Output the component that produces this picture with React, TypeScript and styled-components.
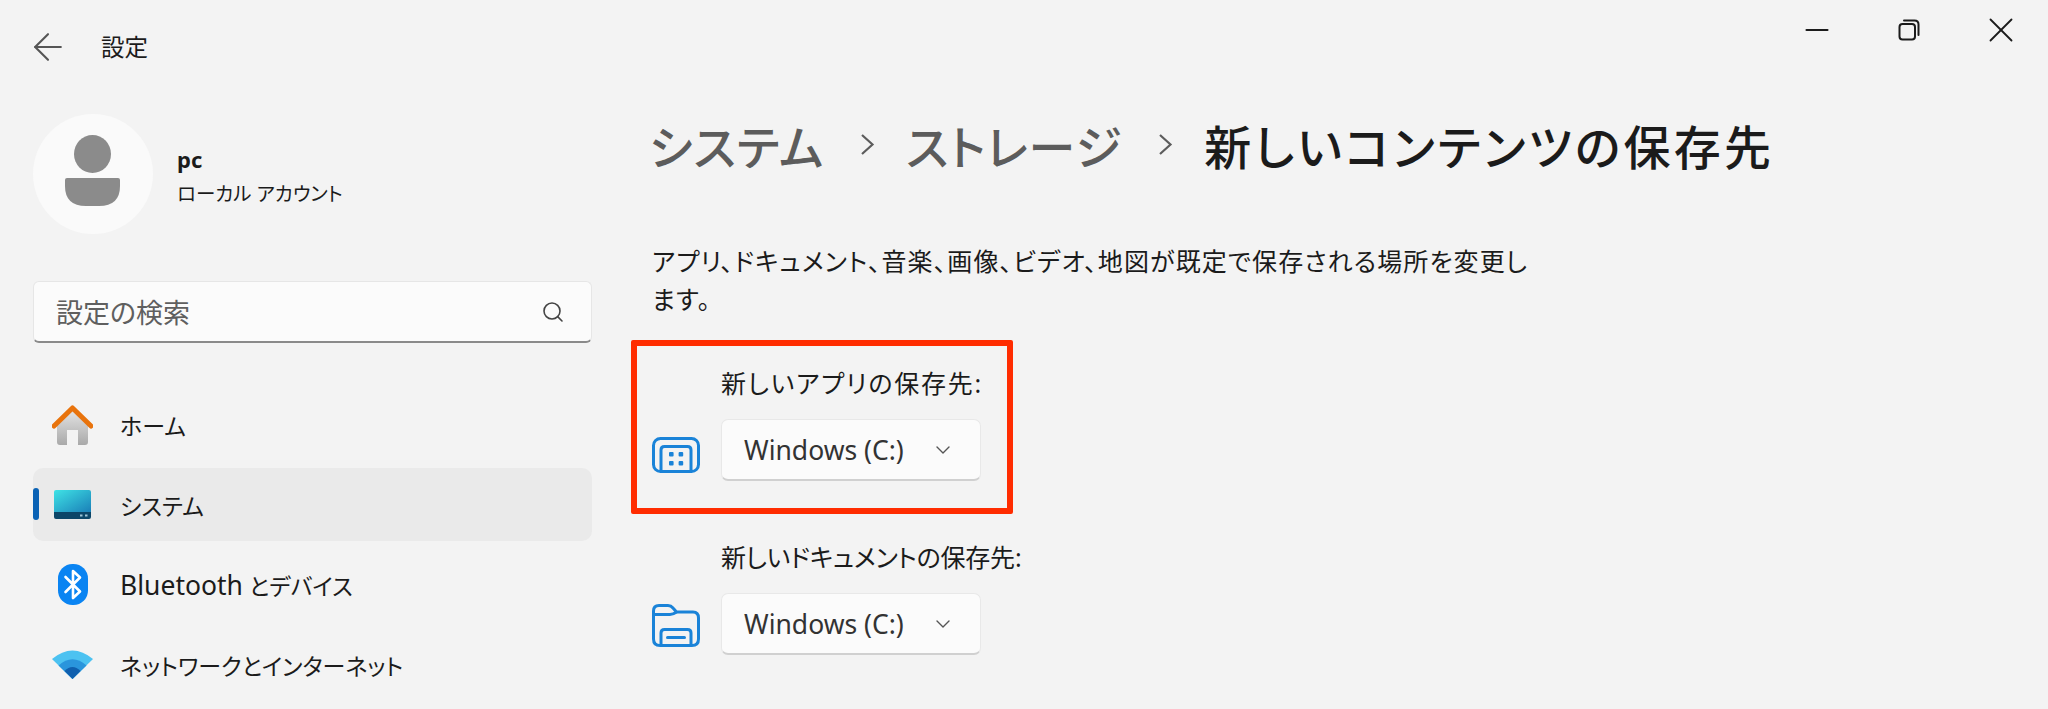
import React from "react";

import { ArrowLeft, ChevronDown, Minus, Search, X } from "lucide-react";
import styled, { createGlobalStyle } from "styled-components";

const GlobalStyle = createGlobalStyle`
  html, body {
    margin: 0;
    height: 100%;
    overflow: hidden;
    background: #f3f3f3;
  }
  body {
    color: #1b1b1b;
    font-family: "Noto Sans", "Noto Sans CJK JP", sans-serif;
    font-feature-settings: "palt";
  }
`;

function HomeIcon(): React.ReactElement {
  return (
    <svg width="41" height="40" viewBox="0 0 41 40">
      <defs>
        <linearGradient id="homeWall" x1="0" y1="0" x2="0" y2="1">
          <stop offset="0" stopColor="#e4e4e4" />
          <stop offset="1" stopColor="#a9a9a9" />
        </linearGradient>
      </defs>
      <path
        fillRule="evenodd"
        d="M20.5 5 L36 19 V37 Q36 40 33 40 H26 V25 H15 V40 H8 Q5 40 5 37 V19 Z"
        fill="url(#homeWall)"
      />
      <path
        d="M2 21 L20.5 3 L39 21"
        fill="none"
        stroke="#e8730c"
        strokeWidth="5"
        strokeLinecap="round"
        strokeLinejoin="round"
      />
    </svg>
  );
}

function SystemIcon(): React.ReactElement {
  return (
    <svg width="37" height="29" viewBox="0 0 37 29">
      <defs>
        <linearGradient id="systemScreen" x1="0" y1="0" x2="1" y2="1">
          <stop offset="0" stopColor="#3fe3e6" />
          <stop offset="1" stopColor="#1a80b8" />
        </linearGradient>
      </defs>
      <path d="M2 0 H35 Q37 0 37 2 V22 H0 V2 Q0 0 2 0 Z" fill="url(#systemScreen)" />
      <path d="M0 22 H37 V27 Q37 29 35 29 H2 Q0 29 0 27 Z" fill="#0c4668" />
      <rect x="26" y="24.5" width="2.5" height="2" fill="#9cc3d6" />
      <rect x="31" y="24.5" width="2.5" height="2" fill="#9cc3d6" />
    </svg>
  );
}

function BluetoothIcon(): React.ReactElement {
  return (
    <svg width="30" height="41" viewBox="0 0 30 41">
      <rect x="0" y="0" width="30" height="41" rx="14.5" fill="#0a84f2" />
      <path
        d="M7.5 13 L22 27.5 L15 34 V7 L22 13.5 L7.5 28"
        fill="none"
        stroke="#ffffff"
        strokeWidth="2.6"
        strokeLinecap="round"
        strokeLinejoin="round"
      />
    </svg>
  );
}

function WifiIcon(): React.ReactElement {
  return (
    <svg width="41" height="29" viewBox="0 0 41 29">
      <path d="M0 9 Q20.5 -8 41 9 L20.5 29 Z" fill="#4cc2f1" />
      <path d="M6.5 15.5 Q20.5 3 34.5 15.5 L20.5 29 Z" fill="#2a95dc" />
      <path d="M12.5 21 Q20.5 13 28.5 21 L20.5 29 Z" fill="#0f5fae" />
    </svg>
  );
}

function RestoreIcon(): React.ReactElement {
  return (
    <svg width="22" height="22" viewBox="0 0 22 22" fill="none" stroke="#1b1b1b" strokeWidth="2">
      <rect x="1.5" y="5" width="15.5" height="15.5" rx="3" />
      <path d="M6 1.5 H16.5 Q20.5 1.5 20.5 5.5 V16" strokeLinecap="round" />
    </svg>
  );
}

function AppsIcon(): React.ReactElement {
  return (
    <svg width="48" height="36" viewBox="0 0 48 36" fill="none" stroke="#1a83d8" strokeWidth="3">
      <rect x="1.5" y="1.5" width="45" height="33" rx="7" />
      <path d="M9 34.5 V13 Q9 9.5 12.5 9.5 H35.5 Q39 9.5 39 13 V34.5" />
      <g fill="#1a83d8" stroke="none">
        <rect x="17" y="15" width="4.6" height="4.6" rx="1" />
        <rect x="26.6" y="15" width="4.6" height="4.6" rx="1" />
        <rect x="17" y="24" width="4.6" height="4.6" rx="1" />
        <rect x="26.6" y="24" width="4.6" height="4.6" rx="1" />
      </g>
    </svg>
  );
}

function FolderIcon(): React.ReactElement {
  return (
    <svg width="48" height="43" viewBox="0 0 48 43" fill="none" stroke="#1a83d8" strokeWidth="3">
      <path d="M1.5 7 Q1.5 1.5 7 1.5 H16 Q19 1.5 21 4 L24.5 8 H41 Q46.5 8 46.5 14 V35 Q46.5 41.5 40 41.5 H8 Q1.5 41.5 1.5 35 Z" />
      <path d="M1.5 10.5 H18 Q21 10.5 24.5 8" />
      <path d="M9 41.5 V29 Q9 25.5 12.5 25.5 H35.5 Q39 25.5 39 29 V41.5" />
      <path d="M15.5 33.5 H32.5" strokeLinecap="round" />
    </svg>
  );
}

function TitleChevron(): React.ReactElement {
  return (
    <ChevronSlot>
      <svg width="15" height="23" viewBox="0 0 15 23" fill="none" stroke="#5c5c5c" strokeWidth="2.2">
        <path d="M2 2 L12.5 11.5 L2 21" />
      </svg>
    </ChevronSlot>
  );
}

export default function App(): React.ReactElement {
  return (
    <>
      <GlobalStyle />
      <Window>
        <TitleBar>
          <BackButton>
            <ArrowLeft size={44} strokeWidth={1.15} color="#555" />
          </BackButton>
          <AppName>設定</AppName>
          <WindowControls>
            <ControlSlot>
              <Minus size={36} strokeWidth={1.4} color="#1b1b1b" />
            </ControlSlot>
            <ControlSlot>
              <RestoreIcon />
            </ControlSlot>
            <ControlSlot>
              <X size={42} strokeWidth={1.05} color="#1b1b1b" />
            </ControlSlot>
          </WindowControls>
        </TitleBar>
        <Body>
          <Sidebar>
            <Profile>
              <Avatar>
                <svg width="120" height="120" viewBox="0 0 120 120">
                  <ellipse cx="59.5" cy="40" rx="18.5" ry="19" fill="#8b8b8b" />
                  <path
                    d="M32 66 Q32 64 34 64 H85 Q87 64 87 66 V72 Q87 92 66 92 H53 Q32 92 32 72 Z"
                    fill="#8b8b8b"
                  />
                </svg>
              </Avatar>
              <ProfileText>
                <ProfileName>pc</ProfileName>
                <ProfileKind>ローカル アカウント</ProfileKind>
              </ProfileText>
            </Profile>
            <SearchBox>
              <SearchHint>設定の検索</SearchHint>
              <Search size={24} strokeWidth={1.6} color="#444" />
            </SearchBox>
            <Nav>
              <NavItem>
                <NavIcon>
                  <HomeIcon />
                </NavIcon>
                ホーム
              </NavItem>
              <NavItem $active>
                <NavMarker />
                <NavIcon>
                  <SystemIcon />
                </NavIcon>
                システム
              </NavItem>
              <NavItem>
                <NavIcon>
                  <BluetoothIcon />
                </NavIcon>
                <LatinRun>Bluetooth</LatinRun>&nbsp;とデバイス
              </NavItem>
              <NavItem>
                <NavIcon>
                  <WifiIcon />
                </NavIcon>
                ネットワークとインターネット
              </NavItem>
            </Nav>
          </Sidebar>
          <Content>
            <PageTitle>
              <Crumb>システム</Crumb>
              <TitleChevron />
              <Crumb>ストレージ</Crumb>
              <TitleChevron />
              <CurrentCrumb>新しいコンテンツの保存先</CurrentCrumb>
            </PageTitle>
            <Description>
              アプリ、ドキュメント、音楽、画像、ビデオ、地図が既定で保存される場所を変更します。
            </Description>
            <Settings>
              <SaveSetting>
                <Highlight />
                <SettingLabel $spacing={1.8}>新しいアプリの保存先:</SettingLabel>
                <SettingIcon>
                  <AppsIcon />
                </SettingIcon>
                <Dropdown>
                  Windows (C:)
                  <ChevronDown size={24} strokeWidth={1.4} color="#555" />
                </Dropdown>
              </SaveSetting>
              <SaveSetting>
                <SettingLabel $spacing={-0.2}>新しいドキュメントの保存先:</SettingLabel>
                <SettingIcon>
                  <FolderIcon />
                </SettingIcon>
                <Dropdown>
                  Windows (C:)
                  <ChevronDown size={24} strokeWidth={1.4} color="#555" />
                </Dropdown>
              </SaveSetting>
            </Settings>
          </Content>
        </Body>
      </Window>
    </>
  );
}

const Window = styled.div`
  display: flex;
  flex-direction: column;
  width: 2048px;
  height: 709px;
  overflow: hidden;
  background: #f3f3f3;
`;

const TitleBar = styled.header`
  display: flex;
  flex: none;
  align-items: center;
  height: 94px;
  padding-left: 26px;
`;

const BackButton = styled.div`
  display: flex;
  width: 75px;
`;

const AppName = styled.div`
  font-size: 23.5px;
  line-height: 30px;
`;

const WindowControls = styled.div`
  display: flex;
  align-self: flex-start;
  margin-left: auto;
  padding: 14px 1px 0 0;
`;

const ControlSlot = styled.div`
  display: flex;
  align-items: center;
  justify-content: center;
  width: 92px;
  height: 32px;
`;

const Body = styled.div`
  display: flex;
  flex: 1;
  min-height: 0;
`;

const Sidebar = styled.aside`
  display: flex;
  flex: none;
  flex-direction: column;
  box-sizing: border-box;
  width: 649px;
  padding: 20px 57px 0 33px;
`;

const Profile = styled.div`
  display: flex;
  align-items: center;
  gap: 24px;
`;

const Avatar = styled.div`
  display: flex;
  width: 120px;
  height: 120px;
  border-radius: 50%;
  background: #fafafa;
`;

const ProfileText = styled.div`
  display: flex;
  flex-direction: column;
  gap: 6px;
  padding-top: 3px;
`;

const ProfileName = styled.div`
  font-size: 22px;
  font-weight: 700;
  line-height: 30px;
`;

const ProfileKind = styled.div`
  font-size: 19.5px;
  line-height: 28px;
`;

const SearchBox = styled.div`
  display: flex;
  align-items: center;
  justify-content: space-between;
  box-sizing: border-box;
  height: 62px;
  margin-top: 47px;
  padding: 0 26px 0 22px;
  border: 1px solid #e6e6e6;
  border-bottom: 2px solid #8a8a8a;
  border-radius: 6px;
  background: #fbfbfb;
`;

const SearchHint = styled.div`
  color: #5f5f5f;
  font-size: 27px;
`;

const Nav = styled.nav`
  display: flex;
  flex-direction: column;
  gap: 7px;
  margin-top: 45px;
`;

const NavItem = styled.div<{ $active?: boolean }>`
  position: relative;
  display: flex;
  align-items: center;
  height: 73px;
  border-radius: 10px;
  background: ${(p) => (p.$active ? "#eaeaea" : "transparent")};
  font-size: 23px;
`;

const NavMarker = styled.span`
  position: absolute;
  top: 20px;
  left: 0;
  width: 6px;
  height: 32px;
  border-radius: 3px;
  background: #0a62b5;
`;

const NavIcon = styled.span`
  display: flex;
  flex: none;
  justify-content: center;
  width: 41px;
  margin: 0 27px 0 19px;
`;

const LatinRun = styled.span`
  font-size: 26.5px;
`;

const Content = styled.main`
  display: flex;
  flex: 1;
  flex-direction: column;
  min-width: 0;
  padding-top: 18px;
`;

const PageTitle = styled.div`
  display: flex;
  align-items: center;
  gap: 31px;
  height: 64px;
  font-size: 47px;
  font-weight: 500;
`;

const ChevronSlot = styled.span`
  display: flex;
  margin-left: 5px;
`;

const Crumb = styled.span`
  color: #5c5c5c;
  letter-spacing: 1px;
`;

const CurrentCrumb = styled.span`
  color: #1b1b1b;
  letter-spacing: 3.2px;
`;

const Description = styled.p`
  width: 890px;
  margin: 66px 0 0 3px;
  font-size: 25px;
  letter-spacing: 1.1px;
  line-height: 38px;
`;

const Settings = styled.div`
  display: flex;
  flex-direction: column;
  gap: 57px;
  margin: 46px 0 0 3px;
`;

const SaveSetting = styled.section`
  position: relative;
  display: grid;
  grid-template-columns: 69px 260px;
  row-gap: 17px;
`;

const Highlight = styled.div`
  position: absolute;
  top: -24px;
  left: -21px;
  box-sizing: border-box;
  width: 382px;
  height: 174px;
  border: 6px solid #ff2c00;
  border-radius: 2px;
`;

const SettingLabel = styled.div<{ $spacing: number }>`
  grid-column: 2;
  font-size: 25px;
  letter-spacing: ${(p) => p.$spacing}px;
  line-height: 38px;
  white-space: nowrap;
`;

const SettingIcon = styled.div`
  display: flex;
  grid-column: 1;
  align-items: flex-end;
  padding-bottom: 8px;
`;

const Dropdown = styled.div`
  display: flex;
  align-items: center;
  justify-content: space-between;
  box-sizing: border-box;
  height: 62px;
  padding: 0 25px 0 22px;
  border: 1px solid #e8e8e8;
  border-bottom: 2px solid #d0d0d0;
  border-radius: 7px;
  background: #fbfbfb;
  color: #333;
  font-size: 26.5px;
`;
